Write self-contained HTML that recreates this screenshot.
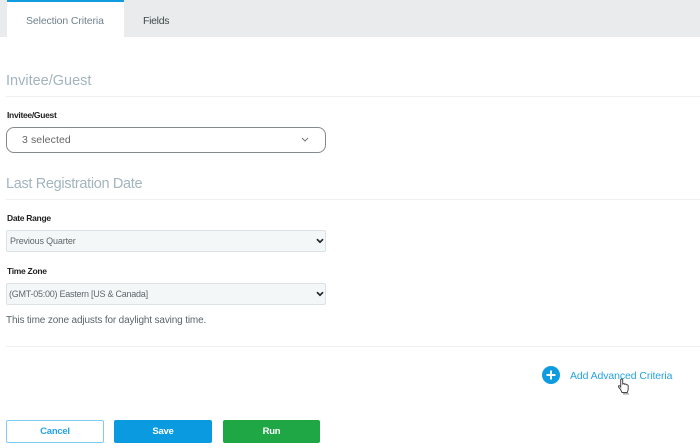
<!DOCTYPE html>
<html><head><meta charset="utf-8">
<style>
html,body{margin:0;padding:0;background:#fff}
body{width:700px;height:448px;position:relative;overflow:hidden;font-family:"Liberation Sans",sans-serif}
.a{position:absolute;white-space:nowrap}
.h{font-size:14.5px;color:#a3b4be;line-height:20px;left:6px}
.l{font-size:8.5px;font-weight:bold;color:#222;left:7px;line-height:12px;letter-spacing:-.3px}
.r{left:6px;width:694px;height:1px;background:#eef0f1}
.s{left:6px;width:318px;height:20px;background:#f3f7f8;border:1px solid #dce2e5;border-radius:2px;font-size:9px;line-height:21px;color:#5f686d}
.s span{margin-left:2px;letter-spacing:-.25px}
.s svg{position:absolute;right:1px;top:7px}
.b{top:420px;height:21px;width:96px;border-radius:2px;text-align:center;font-size:9.5px;font-weight:bold;line-height:22px;color:#fff;border:1px solid transparent;letter-spacing:-.25px}
</style></head><body>
<div class="a" style="left:0;top:0;width:700px;height:37px;background:#e9ebec"></div>
<div class="a" style="left:7px;top:0;width:117px;height:37px;background:#fff;border-top:2px solid #109bde;box-sizing:border-box"></div>
<div class="a" style="left:26px;top:14px;font-size:10.5px;line-height:14px;color:#71828c;letter-spacing:-.12px">Selection Criteria</div>
<div class="a" style="left:143px;top:14px;font-size:10.5px;line-height:14px;color:#3f474c;letter-spacing:-.3px">Fields</div>

<div class="a h" style="top:71px">Invitee/Guest</div>
<div class="a r" style="top:96px"></div>
<div class="a l" style="top:109px">Invitee/Guest</div>
<div class="a" style="left:6px;top:127px;width:318px;height:24px;border:1px solid #83898c;border-radius:8px"></div>
<div class="a" style="left:22px;top:133px;font-size:10.5px;line-height:14px;letter-spacing:.1px;color:#666">3 selected</div>
<svg class="a" style="left:301px;top:137px" width="8" height="5" viewBox="0 0 8 5"><path d="M1 1l3 3 3-3" fill="none" stroke="#777" stroke-width="1"/></svg>

<div class="a h" style="top:174px;letter-spacing:-.33px">Last Registration Date</div>
<div class="a r" style="top:199px"></div>
<div class="a l" style="top:212px">Date Range</div>
<div class="a s" style="top:230px"><span style="margin-left:3px;letter-spacing:-.15px">Previous Quarter</span><svg width="8" height="6" viewBox="0 0 8 6"><path d="M1 1.200L4 4.200l3-3" fill="none" stroke="#222" stroke-width="1.700"/></svg></div>
<div class="a l" style="top:265px">Time Zone</div>
<div class="a s" style="top:283px"><span>(GMT-05:00) Eastern [US &amp; Canada]</span><svg width="8" height="6" viewBox="0 0 8 6"><path d="M1 1.200L4 4.200l3-3" fill="none" stroke="#222" stroke-width="1.700"/></svg></div>
<div class="a" style="left:6px;top:314px;font-size:10px;line-height:14px;color:#5c666c;letter-spacing:-.15px">This time zone adjusts for daylight saving time.</div>
<div class="a r" style="top:346px"></div>

<svg class="a" style="left:542px;top:366px" width="18" height="18" viewBox="0 0 18 18"><circle cx="9" cy="9" r="9" fill="#0f9bdf"/><path d="M9 4.500v9M4.500 9h9" stroke="#fff" stroke-width="2"/></svg>
<div class="a" style="left:570px;top:369px;font-size:10.500px;line-height:14px;color:#26a3e2;letter-spacing:-.1px">Add Advanced Criteria</div>
<svg class="a" style="left:616px;top:378px" width="15" height="17" viewBox="0 0 15 17"><path d="M4.500 11.500C3.500 10 2 9 2.500 8c.6-.8 1.600 0 2.200 1V2c0-1.400 2-1.400 2 0v4c.8-.6 1.700-.5 2 .3.800-.5 1.600-.2 1.900.5.800-.3 1.600.2 1.600 1v3.200c0 1.500-.7 2.500-1 3.500H6c-.3-1-.8-1.800-1.500-3z" fill="#fff" stroke="#444" stroke-width="1"/><path d="M7 15.800h6" stroke="#aaa" stroke-width="1.500"/></svg>

<div class="a b" style="left:6px;background:#fff;border-color:#7fcdf2;color:#27a2e2">Cancel</div>
<div class="a b" style="left:114px;background:#0a9ae0">Save</div>
<div class="a b" style="left:223px;width:95px;background:#1fa746">Run</div>
</body></html>
